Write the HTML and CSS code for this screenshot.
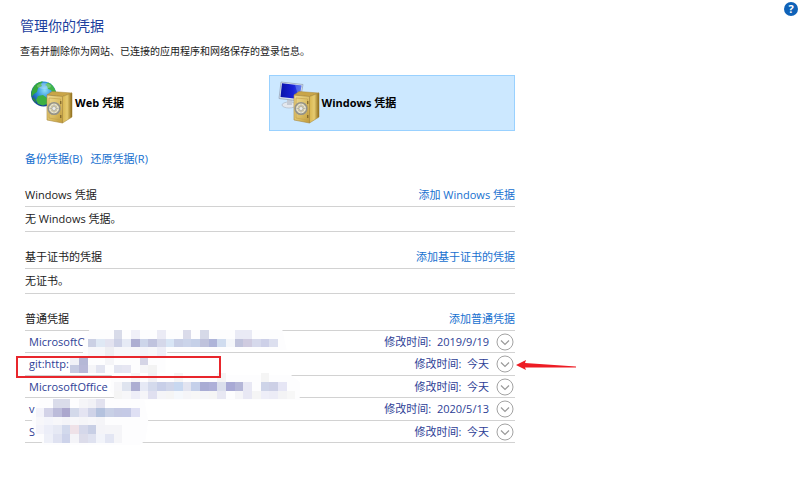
FILE: index.html
```html
<!DOCTYPE html>
<html lang="zh-CN">
<head>
    <meta charset="UTF-8">
    <meta name="viewport" content="width=device-width, initial-scale=1.0">
    <title>凭据管理器</title>
    <link rel="stylesheet" href="styles.css">
</head>
<body>
    <!-- 共用图标 -->
    <svg class="defs" width="0" height="0" aria-hidden="true">
        <defs>
            <linearGradient id="gold" x1="0" y1="0" x2="1" y2="1">
                <stop offset="0" stop-color="#f0dc94"/>
                <stop offset="0.6" stop-color="#d9bb60"/>
                <stop offset="1" stop-color="#c09a3a"/>
            </linearGradient>
            <linearGradient id="goldSide" x1="0" y1="0" x2="1" y2="0">
                <stop offset="0" stop-color="#d8b650"/>
                <stop offset="0.5" stop-color="#e6cb70"/>
                <stop offset="1" stop-color="#8c6a18"/>
            </linearGradient>
            <radialGradient id="sea" cx="0.55" cy="0.35" r="0.65">
                <stop offset="0" stop-color="#8fe0f8"/>
                <stop offset="0.5" stop-color="#2f8fdc"/>
                <stop offset="1" stop-color="#123c92"/>
            </radialGradient>
            <linearGradient id="screen" x1="0" y1="0" x2="1" y2="0">
                <stop offset="0" stop-color="#0a12a8"/>
                <stop offset="0.6" stop-color="#1a22d8"/>
                <stop offset="1" stop-color="#3c58e8"/>
            </linearGradient>
            <g id="safe">
                <path d="M16 15L21 11.500L41 13L31.500 16.500Z" fill="#c9a548" stroke="#a8873a" stroke-width="0.500"/>
                <path d="M31.500 16.500L41 13V37L31.500 43Z" fill="url(#goldSide)" stroke="#a08030" stroke-width="0.500"/>
                <path d="M16 15L31.500 16.500V43L16 40Z" fill="url(#gold)" stroke="#a8873a" stroke-width="0.600"/>
                <path d="M18 18L29.500 19V40L18 38Z" fill="none" stroke="#c4a24c" stroke-width="0.700"/>
                <circle cx="23" cy="28.500" r="5.800" fill="#d8cca0" stroke="#93928a" stroke-width="1.600"/>
                <circle cx="23" cy="28.500" r="4.200" fill="none" stroke="#f0f0ea" stroke-width="0.900"/>
                <path d="M23 24V33M18.500 28.500H27.500M20 25.500L26 31.500M26 25.500L20 31.500" stroke="#b4b4ae" stroke-width="0.900"/>
                <circle cx="23" cy="28.500" r="2" fill="#eeeeea" stroke="#a0a09a" stroke-width="0.600"/>
                <path d="M29.800 21V24M29.800 35V38" stroke="#6c5420" stroke-width="1"/>
            </g>
            <g id="expand">
                <circle cx="9" cy="9" r="8" fill="#fff" stroke="#a3a3a3" stroke-width="1"/>
                <path d="M5 7.500L9 11.500L13 7.500" fill="none" stroke="#9a9a9a" stroke-width="1.200"/>
            </g>
        </defs>
    </svg>

    <main class="content">
        <h1>管理你的凭据</h1>
        <p class="intro">查看并删除你为网站、已连接的应用程序和网络保存的登录信息。</p>

        <div class="vaults">
            <button class="vault" type="button">
                <svg width="42" height="46" viewBox="0 0 42 46" aria-hidden="true">
                    <circle cx="12.500" cy="14" r="12.500" fill="url(#sea)"/>
                    <path d="M2 8C4 4 8 1.500 12 1.500L10 4L11 6L7 8L6 12L3 14L0.500 17C0 13 0.500 11 2 8Z" fill="#35a83a"/>
                    <path d="M17 2.500C21 4 24 8 25 12L22 13L20 10L17 9L16 6L14 5Z" fill="#3fb548"/>
                    <path d="M7 16L12 15L16 18V24L12 25.500L7 24L5 20Z" fill="#3cb043"/>
                    <path d="M1 17L4 19L5 23C3 21.500 1.500 19 1 17Z" fill="#2c8d35"/>
                    <ellipse cx="13" cy="6" rx="7" ry="3" fill="#fff" opacity="0.250"/>
                    <use href="#safe"/>
                </svg>
                <span>Web 凭据</span>
            </button>
            <button class="vault selected" type="button">
                <svg width="42" height="46" viewBox="0 0 42 46" aria-hidden="true">
                    <ellipse cx="11" cy="25" rx="7" ry="3" fill="#e4e8ee" stroke="#a8b0bc" stroke-width="0.600"/>
                    <path d="M9 18H15L14 25H9Z" fill="#c4cad4"/>
                    <path d="M3 2L25 4.500L22 21L1 18.500Z" fill="#dce4ee" stroke="#8e9cb4" stroke-width="0.700"/>
                    <path d="M4 3.200L23.500 5.500L21 19L2.500 17Z" fill="url(#screen)"/>
                    <path d="M17 4.700L23.500 5.500L21 19Z" fill="#7f9cf4" opacity="0.450"/>
                    <use href="#safe"/>
                </svg>
                <span>Windows 凭据</span>
            </button>
        </div>

        <div class="groups">
            <nav class="actions">
                <a href="#">备份凭据(B)</a>
                <a href="#">还原凭据(R)</a>
            </nav>

            <section class="group">
                <header>
                    <h2>Windows 凭据</h2>
                    <a href="#">添加 Windows 凭据</a>
                </header>
                <p class="empty">无 Windows 凭据。</p>
            </section>

            <section class="group">
                <header>
                    <h2>基于证书的凭据</h2>
                    <a href="#">添加基于证书的凭据</a>
                </header>
                <p class="empty">无证书。</p>
            </section>

            <section class="group">
                <header>
                    <h2>普通凭据</h2>
                    <a href="#">添加普通凭据</a>
                </header>
                <div class="list-wrap">
                    <ul class="list">
                        <li>
                            <span class="name">MicrosoftO</span>
                            <span class="modified">修改时间:&nbsp; 2019/9/19</span>
                            <button type="button" aria-label="展开"><svg width="18" height="18"><use href="#expand"/></svg></button>
                        </li>
                        <li>
                            <span class="name">git:http:</span>
                            <span class="modified">修改时间:&nbsp; 今天</span>
                            <button type="button" aria-label="展开"><svg width="18" height="18"><use href="#expand"/></svg></button>
                        </li>
                        <li>
                            <span class="name">MicrosoftOffice</span>
                            <span class="modified">修改时间:&nbsp; 今天</span>
                            <button type="button" aria-label="展开"><svg width="18" height="18"><use href="#expand"/></svg></button>
                        </li>
                        <li>
                            <span class="name">v</span>
                            <span class="modified">修改时间:&nbsp; 2020/5/13</span>
                            <button type="button" aria-label="展开"><svg width="18" height="18"><use href="#expand"/></svg></button>
                        </li>
                        <li>
                            <span class="name">S</span>
                            <span class="modified">修改时间:&nbsp; 今天</span>
                            <button type="button" aria-label="展开"><svg width="18" height="18"><use href="#expand"/></svg></button>
                        </li>
                    </ul>
                    <!-- 打码 -->
                    <svg class="mosaic" width="277" height="130" viewBox="0 0 32 15" aria-hidden="true">
                        <g fill="#fdfdfe">
                            <path d="M7.200 0H29.500L30 2.300H16.200V3H6.500L6.400 1.500Z"/>
                            <path d="M6 2.900H16V4.900H6L4.900 4.600L4.800 3.900Z"/>
                            <path d="M9.800 5.200H30.500L31.500 6V8.100H10.300L9.600 7Z"/>
                            <path d="M1.500 8L13.500 7.800L14 10.500L13.700 12.700L13 13.300H2L0.900 12L0.500 10Z"/>
                        </g>
                        <g id="cells" shape-rendering="crispEdges"></g>
                    </svg>
                    <!-- 标注 -->
                    <div class="mark-box"></div>
                    <svg class="mark-arrow" width="62" height="14" viewBox="0 0 62 14" aria-hidden="true">
                        <path d="M1 6L11 1L10 4L61 7.500V8.500L10 8.500L11 11Z" fill="#ed1c24"/>
                    </svg>
                </div>
            </section>
        </div>
    </main>

    <button class="help" type="button" aria-label="帮助">?</button>

    <script src="script.js"></script>
</body>
</html>
```
FILE: styles.css
```css
* {
    margin: 0;
    padding: 0;
    box-sizing: border-box;
}

body {
    display: flex;
    justify-content: space-between;
    align-items: flex-start;
    background-color: #fff;
    color: #1a1a1a;
    font-family: "Open Sans", "Noto Sans CJK SC", sans-serif;
    font-size: 11px;
    line-height: 20px;
}

button {
    font: inherit;
    color: inherit;
    background: none;
    border: none;
    cursor: pointer;
}

a {
    color: #1670cf;
    text-decoration: none;
}

a:hover {
    text-decoration: underline;
}

.defs {
    position: absolute;
}

.content {
    flex: 1;
    max-width: 515px;
    padding: 16px 0 16px 20px;
}

h1 {
    font-size: 14px;
    font-weight: normal;
    line-height: 20px;
    color: #1c3f9e;
}

.intro {
    margin-top: 5px;
    font-size: 10px;
}

/* 凭据类型切换 */
.vaults {
    display: grid;
    grid-template-columns: 1fr 1fr;
    margin-top: 14px;
    padding-left: 2px;
}

.vault {
    display: flex;
    align-items: center;
    gap: 2px;
    height: 56px;
    padding: 0 8px;
    border: 1px solid transparent;
    font-weight: bold;
    color: #000;
}

.selected {
    background-color: #cce8ff;
    border-color: #99d1ff;
}

.groups {
    padding-left: 5px;
}

.actions {
    display: flex;
    gap: 8px;
    margin-top: 18px;
}

.group {
    margin-top: 13px;
}

.actions + .group {
    margin-top: 14px;
}

.group header {
    display: flex;
    justify-content: space-between;
    height: 24px;
    padding-top: 2px;
    border-bottom: 1px solid #d2d2d2;
}

h2 {
    font-size: 11px;
    font-weight: normal;
}

.empty {
    height: 25px;
    padding-top: 2px;
    border-bottom: 1px solid #d2d2d2;
}

/* 普通凭据列表 */
.list-wrap {
    position: relative;
}

.list {
    list-style: none;
}

.list li {
    display: flex;
    align-items: center;
    height: 22px;
    padding: 0 1px 0 4px;
    border-bottom: 1px solid #d2d2d2;
    color: #2d3e96;
}

.list li:nth-child(even) {
    height: 23px;
}

.name {
    flex: 1;
}

.modified {
    margin-right: 7px;
}

.list button,
.list button svg {
    display: block;
    width: 18px;
    height: 18px;
}

.mosaic {
    position: absolute;
    left: 2px;
    top: -1px;
}

.mark-box {
    position: absolute;
    left: -9px;
    top: 25px;
    width: 205px;
    height: 22px;
    border: 2px solid #e8262c;
}

.mark-arrow {
    position: absolute;
    left: 100%;
    top: 28px;
}

.help {
    width: 14px;
    height: 14px;
    margin: 2px 2px 0 0;
    border-radius: 50%;
    background-color: #0f62b8;
    color: #fff;
    font-size: 11px;
    font-weight: bold;
    line-height: 14px;
    text-align: center;
}
```
FILE: script.js
```js
// 每行: [行号, 起始列, 颜色...]，空串表示不画
var rows = [
    [0, 10, '#d8dbe9', '', '#f0f0f8', '', '', '#ebebf5', '', '', '#dadbea', '', '#d6d9e8', '', '', '', '#e9eaf5', '#e9eaf5'],
    [1, 7, '#cbd0e4', '#dfe8f4', '#e3e3f0', '#cdd1e6', '#e6eaf5', '#adaed2', '#cdd5ea', '#c0c3de', '#d5d8ea', '#d8e5f5', '#c8cfe6', '#cbd4ea', '#c5d0e8', '#bfc2dc', '#aeb4d9', '#d0dcef', '#f4f6fa', '#c0c3dc', '#cfcbe0', '#d6d9ec', '#cdd0e8', '#dcdfef'],
    [2, 7, '#f7f7fa', '#f7f7fa', '#eeeef2', '#f7f7fa', '#f7f7fa', '#f7f7fa', '#f4f4fa', '#f7f7fa', '#eeeef7'],
    [3, 5, '#f1f1f7', '#b5b8d6', '', '', '#f5f5f8', '', '', '', '#d5d5e6'],
    [4, 5, '#c6cbe2', '#b8b9d8', '#f5f5f8', '#e2e4f0', '', '#e3e5f1', '#e6e6f2', '', '#f6f6f8', '#f3f3f3'],
    [5, 12, '#f6f6f8', '', '#f1f1f5', '', '', '#f5f5f5', '', '', '', '', '#f5f5f5', '', '', '', '', '#f5f5f5'],
    [6, 10, '#f5f5f8', '#dfe4ef', '#adaed2', '#e6e9f5', '#d4daec', '#c8cfe8', '#d0d6ea', '#c8d8f0', '#e2e4f0', '#c5d0ea', '#a9acd4', '#aeb0d8', '#dbdfec', '#a9aad5', '#b5b7d8', '#e8e8f4', '', '#ced4e8', '#cdd0e6', '#e6e6f5'],
    [7, 10, '#f5f5f5', '#f7f7f9', '#eeeef8', '#f5f5f8', '#e0e0f0', '#f5f5f8', '#f5f5f5', '#f5f8fc', '#f5f5f8', '#f7f7f7', '#f5f5f8', '#f5f5f5', '#e8e8f3', '', '#f5f5f8', '#e8e8f4', '#f5f5f5', '#eeeef8', '#ececf6', '#f3f3f5', '#f7f7f7'],
    [8, 3, '#dadcea', '#dadcea', '', '#f5f5f8', '#f1f1f6', '#e2e2ef'],
    [9, 1, '#f3f3fa', '#d3d3e8', '#bcbcda', '#aba7cd', '#d3d9ea', '#e4e4f2', '#cfd3e8', '#b4c2de', '#c8d0e6', '#c5cae4', '#c5cae6', '#dfe0f4'],
    [10, 1, '#f7f7fa', '#f4f5fb', '#f7f7fa', '#f4f4f8', '#f7f7fa', '#f5f5f8', '#f7f7fa', '#f5f5f8'],
    [11, 1, '#f4f4fa', '#eceef8', '#e6e9f4', '#d2d9ec', '#efe2e8', '#d5d8ea', '#c8cfe5', '#f4f4f8', '#f5f5f8', '#f5f5f8'],
    [12, 2, '#eef0f8', '#dfe2f1', '#cdd3ea', '#f4f4f8', '#dcdcea', '#dfe2f0', '#f2f4fa', '#e3e6f3', '#f5f5f8']
];

var cells = document.getElementById('cells');

rows.forEach(function(row) {
    row.slice(2).forEach(function(color, i) {
        if (!color) return;
        var rect = document.createElementNS('http://www.w3.org/2000/svg', 'rect');
        rect.setAttribute('x', row[1] + i);
        rect.setAttribute('y', row[0]);
        rect.setAttribute('width', 1);
        rect.setAttribute('height', 1);
        rect.setAttribute('fill', color);
        cells.appendChild(rect);
    });
});
```
